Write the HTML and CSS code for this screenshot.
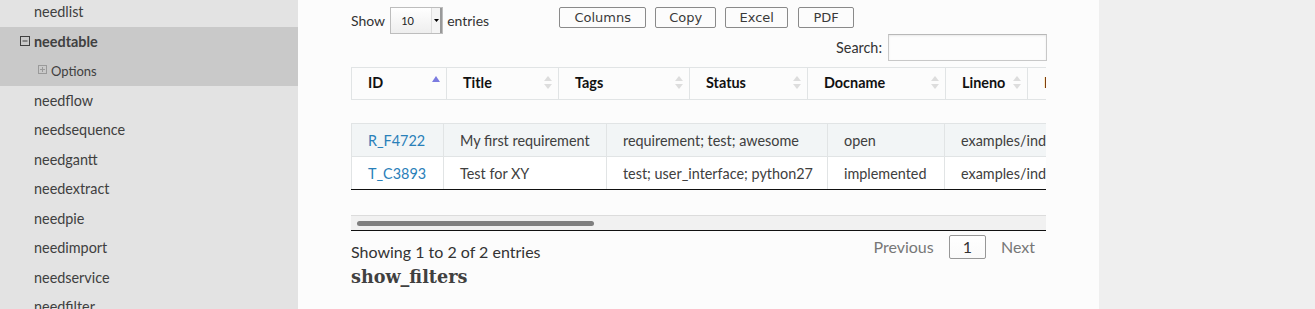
FILE: index.html
```html
<!DOCTYPE html>
<html>
<head>
<meta charset="utf-8">
<link rel="stylesheet" href="styles.css">
</head>
<body>
<div class="page">
  <nav class="sidebar">
    <ul class="toc">
      <li class="item">needlist</li>
      <li class="item current lvl1"><svg class="tog" width="10" height="10" viewBox="0 0 10 10"><rect x="0.5" y="0.5" width="9" height="9" fill="none" stroke="#404040"/><line x1="2.5" y1="5" x2="7.5" y2="5" stroke="#404040"/></svg><b>needtable</b></li>
      <li class="item current lvl2"><svg class="tog" width="9" height="9" viewBox="0 0 9 9"><rect x="0.5" y="0.5" width="8" height="8" fill="none" stroke="#9a9a9a"/><line x1="2" y1="4.5" x2="7" y2="4.5" stroke="#9a9a9a"/><line x1="4.5" y1="2" x2="4.5" y2="7" stroke="#9a9a9a"/></svg>Options</li>
      <li class="item">needflow</li>
      <li class="item">needsequence</li>
      <li class="item">needgantt</li>
      <li class="item">needextract</li>
      <li class="item">needpie</li>
      <li class="item">needimport</li>
      <li class="item">needservice</li>
      <li class="item">needfilter</li>
    </ul>
  </nav>
  <main class="content">
    <div class="dt-top">
      <div class="length">Show <div class="select"><span class="sel-val">10</span><span class="sel-btn"><svg width="5" height="3" viewBox="0 0 5 3"><polygon points="0,0 5,0 2.5,3" fill="#000"/></svg></span></div> entries</div>
      <div class="buttons">
        <button class="dt-btn">Columns</button>
        <button class="dt-btn">Copy</button>
        <button class="dt-btn">Excel</button>
        <button class="dt-btn">PDF</button>
      </div>
    </div>
    <div class="search-row">
      <label class="search-label">Search:</label>
      <div class="search-input"></div>
    </div>
    <div class="scroll">
      <div class="scroll-head">
        <table class="tbl head">
          <colgroup><col style="width:95px"><col style="width:112px"><col style="width:131px"><col style="width:118px"><col style="width:138px"><col style="width:82px"><col style="width:140px"></colgroup>
          <tr>
            <th><div class="th-in"><span>ID</span><svg width="8" height="15" viewBox="0 0 8 15"><polygon points="0,7 4,1 8,7" fill="#7b7be0"/></svg></div></th>
            <th><div class="th-in"><span>Title</span><svg width="8" height="15" viewBox="0 0 8 15"><polygon points="0,6 4,1 8,6" fill="#ddd"/><polygon points="0,9 4,14 8,9" fill="#ddd"/></svg></div></th>
            <th><div class="th-in"><span>Tags</span><svg width="8" height="15" viewBox="0 0 8 15"><polygon points="0,6 4,1 8,6" fill="#ddd"/><polygon points="0,9 4,14 8,9" fill="#ddd"/></svg></div></th>
            <th><div class="th-in"><span>Status</span><svg width="8" height="15" viewBox="0 0 8 15"><polygon points="0,6 4,1 8,6" fill="#ddd"/><polygon points="0,9 4,14 8,9" fill="#ddd"/></svg></div></th>
            <th><div class="th-in"><span>Docname</span><svg width="8" height="15" viewBox="0 0 8 15"><polygon points="0,6 4,1 8,6" fill="#ddd"/><polygon points="0,9 4,14 8,9" fill="#ddd"/></svg></div></th>
            <th><div class="th-in"><span>Lineno</span><svg width="8" height="15" viewBox="0 0 8 15"><polygon points="0,6 4,1 8,6" fill="#ddd"/><polygon points="0,9 4,14 8,9" fill="#ddd"/></svg></div></th>
            <th><div class="th-in"><span>Incoming</span></div></th>
          </tr>
        </table>
      </div>
      <div class="scroll-body">
        <table class="tbl body">
          <colgroup><col style="width:92px"><col style="width:163px"><col style="width:221px"><col style="width:117px"><col style="width:200px"></colgroup>
          <tr class="odd">
            <td><a class="lnk">R_F4722</a></td>
            <td>My first requirement</td>
            <td>requirement; test; awesome</td>
            <td>open</td>
            <td>examples/index.rst</td>
          </tr>
          <tr class="even">
            <td><a class="lnk">T_C3893</a></td>
            <td>Test for XY</td>
            <td>test; user_interface; python27</td>
            <td>implemented</td>
            <td>examples/index.rst</td>
          </tr>
        </table>
      </div>
      <div class="hscroll"><div class="thumb"></div></div>
    </div>
    <div class="dt-bottom">
      <div class="info">Showing 1 to 2 of 2 entries</div>
      <div class="paginate">
        <span class="pg disabled">Previous</span>
        <span class="pg current">1</span>
        <span class="pg disabled">Next</span>
      </div>
    </div>
    <h2 class="section-title">show_filters</h2>
  </main>
  <div class="rest"></div>
</div>
</body>
</html>
```
FILE: styles.css
```css
html, body {
  margin: 0;
  padding: 0;
  height: 100%;
  overflow: hidden;
}
body {
  background: #efefef;
  font-family: Lato, "Liberation Sans", sans-serif;
  color: #404040;
}
.page {
  display: flex;
  height: 309px;
}
.sidebar {
  width: 298px;
  flex: none;
  background: #e3e3e3;
  overflow: hidden;
}
.toc {
  list-style: none;
  margin: -3px 0 0 0;
  padding: 0;
}
.item {
  height: 29.5px;
  display: flex;
  align-items: center;
  padding-left: 34px;
  font-size: 14.4px;
  color: #404040;
}
.item.current {
  background: #c9c9c9;
}
.item.lvl1 {
  padding-left: 20px;
}
.item.lvl1 .tog {
  margin-right: 4px;
}
.item.lvl1 b {
  font-weight: 700;
}
.item.lvl2 {
  padding-left: 38px;
  font-size: 13px;
}
.item.lvl2 .tog {
  margin-right: 4px;
  margin-top: -2px;
}
.content {
  width: 695px;
  flex: none;
  background: #fcfcfc;
  padding: 0 53px 0 53px;
  font-size: 14px;
}
.rest {
  flex: 1;
  background: #efefef;
}
.dt-top {
  display: flex;
  align-items: flex-start;
  padding-top: 7px;
  height: 27px;
}
.length {
  display: flex;
  align-items: center;
  height: 27px;
  font-size: 14px;
  color: #333;
}
.select {
  display: flex;
  width: 51px;
  height: 25px;
  margin: 0 4px 0 5px;
  border: 1px solid #bdbdbd;
  background: linear-gradient(#fff, #eee);
}
.sel-val {
  flex: 1;
  font-size: 11px;
  padding-left: 10px;
  line-height: 25px;
  color: #222;
}
.sel-btn {
  width: 8px;
  display: flex;
  align-items: center;
  justify-content: center;
  border-left: 1px solid #ddd;
  border-right: 2px solid #999;
  background: #f4f4f4;
}
.buttons {
  display: flex;
  gap: 9px;
  margin-left: 70px;
}
.dt-btn {
  height: 21px;
  padding: 0;
  border: 1px solid #8a8a8a;
  border-radius: 2px;
  background: #fcfcfc;
  font-family: "DejaVu Sans", sans-serif;
  font-size: 13px;
  color: #3a3a3a;
  line-height: 19px;
}
.dt-btn:nth-child(1) { width: 87px; }
.dt-btn:nth-child(2) { width: 61px; }
.dt-btn:nth-child(3) { width: 63px; margin-right: 1px; }
.dt-btn:nth-child(4) { width: 56px; }
.search-row {
  display: flex;
  justify-content: flex-end;
  align-items: center;
  height: 27px;
}
.search-label {
  font-size: 14.4px;
  color: #333;
  margin-right: 6px;
}
.search-input {
  width: 157px;
  height: 25px;
  border: 1px solid #c8c8c8;
  border-top-color: #b8b8b8;
  box-shadow: inset 0 1px 2px rgba(0,0,0,0.08);
  background: #fdfdfd;
  margin-right: -1px;
}
.scroll {
  margin-top: 6px;
  width: 695px;
}
.scroll-head, .scroll-body {
  overflow: hidden;
  width: 695px;
}
.tbl {
  border-collapse: collapse;
  table-layout: fixed;
  width: max-content;
}
.tbl.head th {
  height: 31px;
  padding: 0;
  border: 1px solid #e1e4e5;
  text-align: left;
  font-weight: 700;
  color: #111;
  font-size: 14.4px;
}
.th-in {
  display: flex;
  align-items: center;
  justify-content: space-between;
  padding: 0 6px 0 16px;
  margin-top: -2px;
}
.scroll-body {
  margin-top: 23px;
}
.tbl.body td {
  height: 32px;
  padding: 0 0 0 16px;
  border: 1px solid #e1e4e5;
  white-space: nowrap;
  overflow: hidden;
  font-size: 14.4px;
  color: #404040;
}
.tbl.body tr.odd td {
  background: #f2f5f6;
}
.tbl.body tr.even td {
  background: #fff;
  border-bottom: 1px solid #111;
}
.lnk {
  color: #2980b9;
}
.hscroll {
  margin-top: 25px;
  height: 14px;
  border-top: 1px solid #dcdcdc;
  border-bottom: 1px solid #111;
  background: #f1f1f1;
  display: flex;
  align-items: center;
}
.thumb {
  width: 237px;
  height: 5px;
  margin-left: 6px;
  border-radius: 3px;
  background: #7f7f7f;
}
.dt-bottom {
  display: flex;
  justify-content: space-between;
  align-items: flex-start;
  padding-top: 4px;
}
.info {
  margin-top: 7px;
  font-size: 16px;
  line-height: 19px;
  color: #333;
}
.paginate {
  display: flex;
  gap: 0;
  margin-right: -4px;
}
.pg {
  height: 22px;
  line-height: 22px;
  padding: 0 14px;
  font-size: 16px;
  color: #777;
  border: 1px solid transparent;
  border-radius: 2px;
}
.pg.current {
  padding: 0 13px;
  border-color: #979797;
  color: #333;
  background: linear-gradient(#fff, #fafafa);
}
.section-title {
  margin: 5px 0 0 0;
  font-family: "DejaVu Serif", serif;
  font-weight: 700;
  font-size: 17.6px;
  line-height: 22px;
  color: #404040;
}
```
